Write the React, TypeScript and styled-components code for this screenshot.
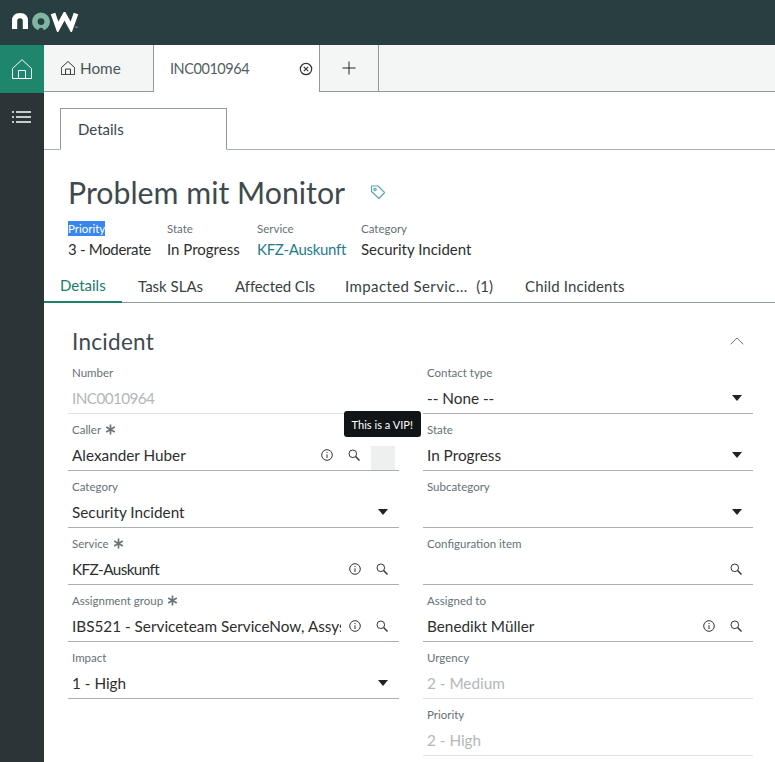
import React from "react";
import styled, { createGlobalStyle } from "styled-components";
import { ChevronUp } from "lucide-react";

const Global = createGlobalStyle`
  html, body { margin: 0; padding: 0; background: #fff; }
  body { font-family: "Lato", "Open Sans", sans-serif; color: #2e2e2e; overflow: hidden; }
  #root { width: 775px; height: 762px; overflow: hidden; }
`;

const Page = styled.div`display: flex; flex-direction: column; width: 775px; height: 762px;`;
const TopBar = styled.header`height: 45px; box-sizing: border-box; flex: none; background: #293e40; padding: 12px 0 0 12px;`;
const Logo = styled.svg`width: 68px; height: 20px; display: block;`;
const Body = styled.div`display: flex; flex: 1; min-height: 0;`;
const Rail = styled.nav`width: 44px; flex: none; background: #2b3538; display: flex; flex-direction: column;`;
const RailHome = styled.div`height: 48px; background: #1e866d; display: flex; align-items: center; justify-content: center;`;
const RailList = styled.div`height: 48px; display: flex; align-items: center; justify-content: center;`;
const Main = styled.main`flex: 1; min-width: 0; background: #fff;`;
const TabBar = styled.div`display: flex; height: 47px; align-items: stretch;`;
const Tab = styled.div<{ $w: number }>`
  width: ${p => p.$w}px; flex: none; box-sizing: border-box; background: #f4f5f5;
  border-right: 1px solid #8f9a9c; border-bottom: 1px solid #8f9a9c;
  display: flex; align-items: center; font-size: 15.3px; color: #4a5558;
`;
const HomeTab = styled(Tab)`padding-left: 17px; gap: 5px;`;
const ActiveTab = styled(Tab)`background: #fff; border-bottom: none; padding: 0 6px 0 16px; justify-content: space-between; font-size: 14.5px; letter-spacing: -0.45px; color: #555e60;`;
const PlusTab = styled(Tab)`justify-content: center;`;
const TabRest = styled.div`flex: 1; background: #f4f5f5; border-bottom: 1px solid #8f9a9c;`;
const SubBar = styled.div`height: 58px; box-sizing: border-box; padding: 16px 0 0 16px; border-bottom: 1px solid #a9b0b1; display: flex; align-items: flex-end;`;
const SubTab = styled.div`
  width: 167px; height: 42px; box-sizing: border-box; margin-bottom: -1px; background: #fff;
  border: 1px solid #8f9a9c; border-bottom: 1px solid #fff; padding-left: 17px;
  display: flex; align-items: center; font-size: 15px; color: #39464a;
`;
const Header = styled.section`padding: 22px 0 0 24px;`;
const TitleRow = styled.div`display: flex; align-items: center; gap: 25px; height: 40px;`;
const Title = styled.h1`margin: 0; font-size: 30.3px; font-weight: 400; color: #3e4a4d;`;
const Summary = styled.div`display: flex; margin-top: 9px;`;
const SummaryItem = styled.div<{ $w: number }>`display: flex; flex-direction: column; gap: 3px; width: ${p => p.$w}px; flex: none; white-space: nowrap;`;
const SummaryLabel = styled.span<{ $sel?: boolean }>`
  font-size: 11.5px; line-height: 15px; align-self: flex-start;
  color: ${p => p.$sel ? "#fff" : "#667275"}; background: ${p => p.$sel ? "#3a86f0" : "transparent"};
`;
const SummaryValue = styled.span<{ $link?: boolean; $tight?: boolean }>`
  font-size: 15px; line-height: 20px; color: ${p => p.$link ? "#1e7d8c" : "#2e2e2e"};
  letter-spacing: ${p => p.$tight ? "-0.3px" : "0"};
`;
const Tabs = styled.div`display: flex; margin-top: 10px; height: 33px; border-bottom: 1px solid #8f9a9c;`;
const FormTab = styled.div<{ $active?: boolean; $w?: number }>`
  box-sizing: border-box; height: 34px; padding: ${p => p.$active ? "0 16px" : "0 16px 1px"}; display: flex; align-items: center; font-size: 15px; white-space: nowrap; flex: none;
  justify-content: space-between;
  ${p => p.$w ? `width: ${p.$w}px;` : ""}
  color: ${p => p.$active ? "#1c7a6e" : "#3a3f41"};
  border-bottom: ${p => p.$active ? "2px solid #1c8269" : "none"};
`;
const WideLabel = styled.span<{ $s: number }>`letter-spacing: ${p => p.$s}px;`;
const Form = styled.section`padding: 23px 22px 0 24px;`;
const FormHead = styled.div`display: flex; justify-content: space-between; align-items: center; height: 30px; padding: 0 4px 0 4px;`;
const FormTitle = styled.h2`margin: 0; font-size: 22.5px; font-weight: 400; color: #3e4a4d; letter-spacing: 0.3px;`;
const Grid = styled.div`display: grid; grid-template-columns: 331px 330px; column-gap: 24px; margin-top: 5px;`;
const Col = styled.div`display: flex; flex-direction: column;`;
const Field = styled.div`height: 57px; box-sizing: border-box; padding: 0 0 0 4px; display: flex; flex-direction: column; position: relative;`;
const Label = styled.label`font-size: 11.5px; line-height: 15px; height: 15px; color: #667275; margin-top: 4px; display: flex; align-items: center; gap: 4px;`;
const Star = styled.svg`width: 11px; height: 11px;`;
const ValueRow = styled.div<{ $faint?: boolean; $tight?: boolean }>`
  height: 34px; box-sizing: border-box; margin-left: -4px; padding: 3px 0 0 4px; display: flex; align-items: center;
  border-bottom: 1px solid ${p => p.$faint ? "#dfe3e3" : "#a9b0b1"};
  font-size: 15.3px; color: ${p => p.$faint ? "#b3b7b8" : "#2e2e2e"};
  letter-spacing: ${p => p.$tight ? "-0.6px" : "0"};
`;
const ValueText = styled.span`flex: 1; min-width: 0; white-space: nowrap; overflow: hidden;`;
const IconSlot = styled.span<{ $end?: boolean }>`width: 27px; flex: none; display: flex; justify-content: center; align-items: center; margin-right: ${p => p.$end ? "4px" : "0"};`;
const Caret = styled.span`
  flex: none; margin-right: 11px; width: 0; height: 0;
  border-left: 5.5px solid transparent; border-right: 5.5px solid transparent; border-top: 6px solid #222;
`;
const VipSlot = styled.span`width: 24px; height: 24px; flex: none; margin-right: 4px; background: #eef0f0; align-self: flex-end;`;
const Tooltip = styled.div`
  position: absolute; top: -7px; right: -22px; height: 26px; padding: 0 8px; background: #111517; color: #fff;
  font-size: 11.1px; display: flex; align-items: center; border-radius: 3px;
`;
const Spacer = styled.div`height: 57px;`;
const TrademarkText = styled.text`font-size: 3.5px; fill: #fff;`;

const HomeIcon = ({ size = 16, color = "#333" }: { size?: number; color?: string }) => (
  <svg width={size} height={size} viewBox="0 0 20 20" fill="none" stroke={color} strokeWidth={20 / size}>
    <path d="M0.5 9.5 L10 0.7 L19.5 9.5 V19.5 H0.5 Z" strokeLinejoin="round" />
    <path d="M6.5 19.5 V11.5 H13.5 V19.5" />
  </svg>
);
const ListIcon = () => (
  <svg width="20" height="14" viewBox="0 0 20 14" fill="#c6cccd">
    <rect x="0" y="1" width="2" height="2" /><rect x="4" y="1" width="15" height="2" />
    <rect x="0" y="6" width="2" height="2" /><rect x="4" y="6" width="15" height="2" />
    <rect x="0" y="11" width="2" height="2" /><rect x="4" y="11" width="15" height="2" />
  </svg>
);
const CloseIcon = () => (
  <svg width="14" height="14" viewBox="0 0 14 14" fill="none" stroke="#333" strokeWidth="1.2">
    <circle cx="7" cy="7" r="5.7" /><path d="M4.8 4.8 L9.2 9.2 M9.2 4.8 L4.8 9.2" />
  </svg>
);
const PlusIcon = () => (
  <svg width="14" height="14" viewBox="0 0 14 14" stroke="#222" strokeWidth="1"><path d="M7 0.5 V13.5 M0.5 7 H13.5" /></svg>
);
const TagIcon = () => (
  <svg width="16" height="16" viewBox="0 0 16 16" fill="none" stroke="#5fa5b2" strokeWidth="1.2">
    <path d="M1.5 2 H8 L14.5 8.5 L9 14.5 L1.5 7.5 Z" strokeLinejoin="round" /><circle cx="5" cy="5.5" r="1.2" />
  </svg>
);
const InfoIcon = () => (
  <svg width="12" height="12" viewBox="0 0 12 12" fill="none" stroke="#333" strokeWidth="1">
    <circle cx="6" cy="6" r="5.3" /><path d="M6 5.3 V9" /><path d="M6 3 V4" />
  </svg>
);
const SearchIcon = () => (
  <svg width="12" height="12" viewBox="0 0 12 12" fill="none" stroke="#333" strokeWidth="1">
    <circle cx="4.8" cy="4.8" r="3.8" /><path d="M7.6 7.6 L11.5 11.5" strokeWidth="1.4" />
  </svg>
);
const Required = () => (
  <Star viewBox="0 0 11 11" stroke="#6b7577" strokeWidth="1.7"><path d="M5.5 0.5 V10.5 M1.2 3 L9.8 8 M9.8 3 L1.2 8" /></Star>
);

type F = { label: string; value?: string; req?: boolean; faint?: boolean; select?: boolean; info?: boolean; search?: boolean; vip?: boolean; tight?: boolean };
const left: F[] = [
  { label: "Number", value: "INC0010964", faint: true, tight: true },
  { label: "Caller", value: "Alexander Huber", req: true, info: true, search: true, vip: true },
  { label: "Category", value: "Security Incident", select: true },
  { label: "Service", value: "KFZ-Auskunft", req: true, info: true, search: true, tight: true },
  { label: "Assignment group", value: "IBS521 - Serviceteam ServiceNow, Assyst, Remedy", req: true, info: true, search: true },
  { label: "Impact", value: "1 - High", select: true },
];
const right: F[] = [
  { label: "Contact type", value: "-- None --", select: true },
  { label: "State", value: "In Progress", select: true },
  { label: "Subcategory", value: "", select: true },
  { label: "Configuration item", value: "", search: true },
  { label: "Assigned to", value: "Benedikt Müller", info: true, search: true },
  { label: "Urgency", value: "2 - Medium", faint: true },
  { label: "Priority", value: "2 - High", faint: true },
];

const FieldView = ({ f }: { f: F }) => (
  <Field>
    <Label>{f.label}{f.req && <Required />}</Label>
    <ValueRow $faint={f.faint} $tight={f.tight}>
      <ValueText>{f.value}</ValueText>
      {f.info && <IconSlot><InfoIcon /></IconSlot>}
      {f.search && <IconSlot $end><SearchIcon /></IconSlot>}
      {f.vip && <VipSlot />}
      {f.select && <Caret />}
    </ValueRow>
    {f.vip && <Tooltip>This is a VIP!</Tooltip>}
  </Field>
);

export default function App() {
  return (
    <Page>
      <Global />
      <TopBar>
        <Logo viewBox="0 0 68 20">
          <path d="M2.6 17 V9 Q2.6 3.6 8 3.6 Q13.4 3.6 13.4 9 V17" fill="none" stroke="#fff" strokeWidth="5.2" />
          <circle cx="29" cy="9.6" r="6.2" fill="none" stroke="#81b5a1" strokeWidth="5.6" />
          <circle cx="29" cy="18.4" r="2.6" fill="#293e40" />
          <path d="M41 1.5 L46 15.5 L52.5 3.5 L59 15.5 L64 1.5" fill="none" stroke="#fff" strokeWidth="4.8" />
          <TrademarkText x="63" y="17">™</TrademarkText>
        </Logo>
      </TopBar>
      <Body>
        <Rail>
          <RailHome><HomeIcon size={20} color="#fff" /></RailHome>
          <RailList><ListIcon /></RailList>
        </Rail>
        <Main>
          <TabBar>
            <HomeTab $w={110}><HomeIcon size={14} />Home</HomeTab>
            <ActiveTab $w={166}>INC0010964<CloseIcon /></ActiveTab>
            <PlusTab $w={59}><PlusIcon /></PlusTab>
            <TabRest />
          </TabBar>
          <SubBar><SubTab>Details</SubTab></SubBar>
          <Header>
            <TitleRow><Title>Problem mit Monitor</Title><TagIcon /></TitleRow>
            <Summary>
              <SummaryItem $w={99}><SummaryLabel $sel>Priority</SummaryLabel><SummaryValue $tight>3 - Moderate</SummaryValue></SummaryItem>
              <SummaryItem $w={90}><SummaryLabel>State</SummaryLabel><SummaryValue>In Progress</SummaryValue></SummaryItem>
              <SummaryItem $w={104}><SummaryLabel>Service</SummaryLabel><SummaryValue $link $tight>KFZ-Auskunft</SummaryValue></SummaryItem>
              <SummaryItem $w={120}><SummaryLabel>Category</SummaryLabel><SummaryValue>Security Incident</SummaryValue></SummaryItem>
            </Summary>
          </Header>
          <Tabs>
            <FormTab $active $w={78}>Details</FormTab>
            <FormTab $w={97}>Task SLAs</FormTab>
            <FormTab $w={110}><WideLabel $s={-0.1}>Affected CIs</WideLabel></FormTab>
            <FormTab $w={180}><WideLabel $s={0.4}>Impacted Servic…</WideLabel><span>(1)</span></FormTab>
            <FormTab><WideLabel $s={0.15}>Child Incidents</WideLabel></FormTab>
          </Tabs>
          <Form>
            <FormHead><FormTitle>Incident</FormTitle><ChevronUp size={24} color="#777" strokeWidth={1} /></FormHead>
            <Grid>
              <Col>{left.map(f => <FieldView key={f.label} f={f} />)}<Spacer /></Col>
              <Col>{right.map(f => <FieldView key={f.label} f={f} />)}</Col>
            </Grid>
          </Form>
        </Main>
      </Body>
    </Page>
  );
}
